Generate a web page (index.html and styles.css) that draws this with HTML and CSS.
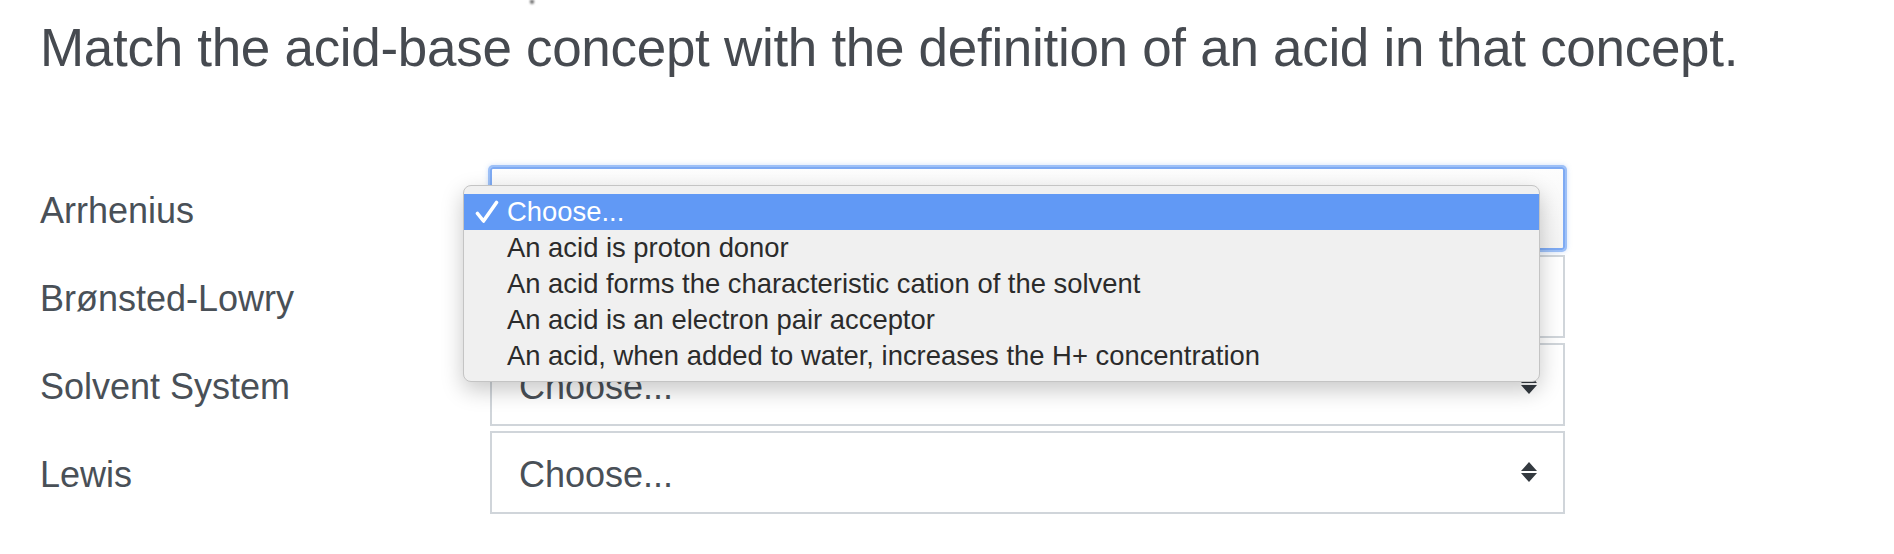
FILE: index.html
```html
<!DOCTYPE html>
<html lang="en">
<head>
<meta charset="utf-8">
<title>Acid-base concepts</title>
<link rel="stylesheet" href="styles.css">
</head>
<body>
<div class="cursor-speck"></div>
<main class="page">
  <h1 class="title">Match the acid-base concept with the definition of an acid in that concept.</h1>
  <div class="form">
    <div class="label">Arrhenius</div>
    <div class="select focused"><span class="value">Choose...</span>
      <svg class="arrows" width="16" height="20" viewBox="0 0 16 20"><path d="M0 9 L8 0 L16 9 Z M0 11 L16 11 L8 20 Z"/></svg>
    </div>
    <div class="label">Brønsted-Lowry</div>
    <div class="select"><span class="value">Choose...</span>
      <svg class="arrows" width="16" height="20" viewBox="0 0 16 20"><path d="M0 9 L8 0 L16 9 Z M0 11 L16 11 L8 20 Z"/></svg>
    </div>
    <div class="label">Solvent System</div>
    <div class="select"><span class="value">Choose...</span>
      <svg class="arrows" width="16" height="20" viewBox="0 0 16 20"><path d="M0 9 L8 0 L16 9 Z M0 11 L16 11 L8 20 Z"/></svg>
    </div>
    <div class="label">Lewis</div>
    <div class="select"><span class="value">Choose...</span>
      <svg class="arrows" width="16" height="20" viewBox="0 0 16 20"><path d="M0 9 L8 0 L16 9 Z M0 11 L16 11 L8 20 Z"/></svg>
    </div>
  </div>
  <ul class="menu">
    <li class="item selected"><svg class="check" width="24" height="24" viewBox="0 0 24 24"><path d="M2.5 13.5 L8.5 21 L21.5 2.5"/></svg>Choose...</li>
    <li class="item">An acid is proton donor</li>
    <li class="item">An acid forms the characteristic cation of the solvent</li>
    <li class="item">An acid is an electron pair acceptor</li>
    <li class="item">An acid, when added to water, increases the H+ concentration</li>
  </ul>
</main>
</body>
</html>
```
FILE: styles.css
```css
html, body {
  margin: 0;
  padding: 0;
  background: #ffffff;
}
body {
  width: 1894px;
  height: 554px;
  overflow: hidden;
  position: relative;
  font-family: "Liberation Sans", Arial, sans-serif;
  color: #495057;
}
.cursor-speck {
  position: absolute;
  left: 530px;
  top: 0;
  width: 4px;
  height: 4px;
  border-radius: 0 0 3px 3px;
  background: #6d6d6d;
  filter: blur(0.8px);
}
.page {
  padding-left: 40px;
}
.title {
  margin: 16px 0 0;
  font-size: 53px;
  font-weight: 400;
  line-height: 1.2;
  color: #464a50;
  letter-spacing: -0.3px;
}
.form {
  margin-top: 87px;
  display: grid;
  grid-template-columns: 450px 1075px;
  grid-auto-rows: 83px;
  row-gap: 5px;
}
.label {
  display: flex;
  align-items: center;
  padding-top: 5px;
  font-size: 36px;
  color: #495057;
}
.select {
  box-sizing: border-box;
  display: flex;
  align-items: center;
  justify-content: space-between;
  padding: 0 26px 0 27px;
  border: 2px solid #d0d5da;
  background: #ffffff;
  font-size: 36px;
  color: #495057;
}
.select .value {
  padding-top: 5px;
}
.select.focused {
  border-color: #7eaaf3;
  border-radius: 3px;
  box-shadow: 0 0 0 2px #9dc0f7, 0 0 5px 2px rgba(120, 165, 240, 0.35);
  background: linear-gradient(#fdfdfd, #f4f4f4);
}
.arrows {
  fill: #343a40;
  flex: none;
}
.menu {
  position: absolute;
  left: 463px;
  top: 185px;
  width: 1077px;
  height: 197px;
  box-sizing: border-box;
  margin: 0;
  padding: 8px 0 0;
  list-style: none;
  background: #f0f0f0;
  border: 1px solid #c4c4c4;
  border-radius: 8px;
  box-shadow: 0 8px 22px rgba(0, 0, 0, 0.22);
  font-family: "Liberation Sans", Arial, sans-serif;
  font-size: 27.4px;
  color: #2b2b2b;
}
.item {
  position: relative;
  height: 36px;
  line-height: 36px;
  padding-left: 43px;
  white-space: nowrap;
}
.item.selected {
  background: #6199f5;
  color: #ffffff;
}
.check {
  position: absolute;
  left: 11px;
  top: 6px;
  fill: none;
  stroke: #ffffff;
  stroke-width: 3.6;
  stroke-linecap: round;
  stroke-linejoin: round;
}
```
